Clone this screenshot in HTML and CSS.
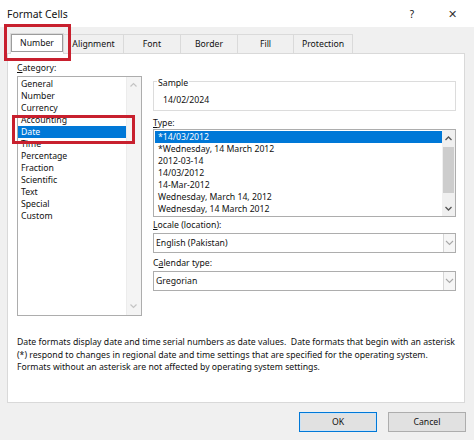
FILE: index.html
```html
<!DOCTYPE html>
<html lang="en">
<head>
  <meta charset="utf-8">
  <title>Format Cells</title>
  <link rel="stylesheet" href="styles.css">
</head>
<body>
  <div class="dialog">
    <div class="titlebar">
      <span class="title">Format Cells</span>
      <span class="help">?</span>
      <span class="close">&#x2715;</span>
    </div>

    <div class="tabs">
      <div class="tab active"><span class="focus">Number</span></div>
      <div class="tab w60">Alignment</div>
      <div class="tab w57">Font</div>
      <div class="tab w57">Border</div>
      <div class="tab w56">Fill</div>
      <div class="tab w59">Protection</div>
    </div>

    <div class="panel">
      <div class="columns">
        <div class="left">
          <div class="label"><u>C</u>ategory:</div>
          <div class="listbox catList">
            <div class="items">
              <div class="item">General</div>
              <div class="item">Number</div>
              <div class="item">Currency</div>
              <div class="item">Accounting</div>
              <div class="item selected">Date</div>
              <div class="item">Time</div>
              <div class="item">Percentage</div>
              <div class="item">Fraction</div>
              <div class="item">Scientific</div>
              <div class="item">Text</div>
              <div class="item">Special</div>
              <div class="item">Custom</div>
            </div>
            <div class="scroll light">
              <svg class="arrow" width="13" height="12" viewBox="0 0 13 12"><polyline points="3.5,7.5 6.5,4.5 9.5,7.5" fill="none" stroke="#c4c4c4" stroke-width="1.2"/></svg>
              <svg class="arrow" width="13" height="12" viewBox="0 0 13 12"><polyline points="3.5,4.5 6.5,7.5 9.5,4.5" fill="none" stroke="#c4c4c4" stroke-width="1.2"/></svg>
            </div>
          </div>
        </div>

        <div class="right">
          <div class="sample">
            <span class="legend">Sample</span>
            <div class="sampleValue">14/02/2024</div>
          </div>

          <div class="label typeLabel"><u>T</u>ype:</div>
          <div class="listbox typeList">
            <div class="items">
              <div class="item selected">*14/03/2012</div>
              <div class="item">*Wednesday, 14 March 2012</div>
              <div class="item">2012-03-14</div>
              <div class="item">14/03/2012</div>
              <div class="item">14-Mar-2012</div>
              <div class="item">Wednesday, March 14, 2012</div>
              <div class="item">Wednesday, 14 March 2012</div>
            </div>
            <div class="scroll dark">
              <svg class="arrow" width="13" height="17" viewBox="0 0 13 17"><polyline points="3.5,10 6.5,7 9.5,10" fill="none" stroke="#555" stroke-width="1.3"/></svg>
              <div class="thumb"></div>
              <svg class="arrow" width="13" height="13" viewBox="0 0 13 13"><polyline points="3.5,5 6.5,8 9.5,5" fill="none" stroke="#555" stroke-width="1.3"/></svg>
            </div>
          </div>

          <div class="label localeLabel"><u>L</u>ocale (location):</div>
          <div class="combo">
            <span class="comboText">English (Pakistan)</span>
            <span class="drop"><svg width="9" height="6" viewBox="0 0 9 6"><polyline points="1,1 4.5,4.5 8,1" fill="none" stroke="#a8a8a8" stroke-width="1.1"/></svg></span>
          </div>

          <div class="label calLabel">C<u>a</u>lendar type:</div>
          <div class="combo">
            <span class="comboText">Gregorian</span>
            <span class="drop"><svg width="9" height="6" viewBox="0 0 9 6"><polyline points="1,1 4.5,4.5 8,1" fill="none" stroke="#a8a8a8" stroke-width="1.1"/></svg></span>
          </div>
        </div>
      </div>

      <p class="desc">Date formats display date and time serial numbers as date values.&nbsp; Date formats that begin with an asterisk<br>
(*) respond to changes in regional date and time settings that are specified for the operating system.<br>
Formats without an asterisk are not affected by operating system settings.</p>
    </div>

    <div class="footer">
      <button class="btn ok">OK</button>
      <button class="btn">Cancel</button>
    </div>

    <div class="mark markTab"></div>
    <div class="mark markDate"></div>
  </div>
</body>
</html>
```

FILE: styles.css
```css
html {
  font-family: "Noto Sans", "Liberation Sans", sans-serif;
}
body {
  margin: 0;
  background: #f0f0f0;
}
.dialog {
  position: relative;
  width: 474px;
  height: 440px;
  background: #f0f0f0;
  font-size: 8.7px;
  color: #111;
  overflow: hidden;
}

/* title bar */
.titlebar {
  height: 27px;
  background: #fff;
  display: flex;
  align-items: center;
  padding: 0 0 0 7px;
}
.title {
  flex: 1;
  font-size: 10.4px;
  margin-top: 1px;
}
.help {
  width: 12px;
  font-size: 10px;
  margin-right: 27px;
  text-align: center;
}
.close {
  width: 14px;
  font-size: 11px;
  margin-right: 15px;
  text-align: center;
  color: #333;
}

/* tabs */
.tabs {
  height: 26px;
  padding-left: 10px;
  display: flex;
  align-items: flex-end;
  background: #f0f0f0;
}
.tab {
  height: 19px;
  box-sizing: border-box;
  border: 1px solid #dadada;
  border-bottom: none;
  border-left: none;
  display: flex;
  align-items: center;
  justify-content: center;
  background: #f0f0f0;
}
.w60 { width: 60px; }
.w57 { width: 57px; }
.w56 { width: 56px; }
.w59 { width: 59px; }
.tab.active {
  width: 54px;
  height: 21px;
  background: #fff;
  border-left: 1px solid #dadada;
  margin-bottom: -1px;
  padding-bottom: 2px;
}
.focus {
  border: 1px solid #9c9c9c;
  padding: 2px 7px;
  width: 38px;
  text-align: center;
}

/* panel */
.panel {
  height: 350px;
  margin: 0 9px 0 7px;
  box-sizing: border-box;
  border: 1px solid #d9d9d9;
  background: #fff;
  padding: 8px 0 0 9px;
}
.columns {
  display: flex;
  gap: 11px;
}
.left {
  width: 125px;
}
.right {
  width: 303px;
}
.label {
  height: 12px;
  line-height: 12px;
}
.listbox {
  display: flex;
  border: 1px solid #adadad;
  box-sizing: border-box;
  background: #fff;
}
.catList {
  margin-top: 2px;
  height: 240px;
}
.items {
  flex: 1;
  padding: 1px 0 0 0;
}
.item {
  height: 12px;
  line-height: 12px;
  padding-left: 3px;
  white-space: nowrap;
}
.item.selected {
  background: #0078d7;
  color: #fff;
}
.scroll {
  width: 14px;
  display: flex;
  flex-direction: column;
  justify-content: space-between;
}
.scroll.light {
  background: #f4f4f4;
  border-left: 1px solid #ececec;
  padding: 2px 0 3px;
}
.scroll.dark {
  width: 13px;
  background: #f0f0f0;
  justify-content: flex-start;
}
.thumb {
  height: 46px;
  background: #cdcdcd;
  margin: 0 1px;
}
.scroll.dark .arrow:last-child {
  margin-top: auto;
  margin-bottom: 1px;
}

/* right column */
.sample {
  margin-top: 19px;
  height: 30px;
  box-sizing: border-box;
  border: 1px solid #dcdcdc;
}
.legend {
  display: inline-block;
  margin: -5px 0 0 3px;
  padding: 0 1px;
  background: #fff;
  line-height: 12px;
  vertical-align: top;
}
.sampleValue {
  padding-left: 9px;
  line-height: 12px;
}
.typeLabel {
  margin-top: 6px;
}
.typeList {
  height: 88px;
}
.typeList .items {
  padding: 1px 0 0 1px;
}
.localeLabel {
  margin-top: 2px;
}
.combo {
  margin-top: 2px;
  height: 20px;
  box-sizing: border-box;
  border: 1px solid #adadad;
  display: flex;
  align-items: center;
  background: #fff;
}
.comboText {
  flex: 1;
  padding-left: 2px;
}
.drop {
  width: 12px;
  height: 18px;
  box-sizing: border-box;
  border-left: 1px solid #d6d6d6;
  background: #f6f6f6;
  display: flex;
  align-items: center;
  justify-content: center;
}
.calLabel {
  margin-top: 4px;
}

/* description */
.desc {
  margin: 20px 0 0 0;
  line-height: 12.5px;
  white-space: nowrap;
}

/* footer buttons */
.footer {
  display: flex;
  justify-content: flex-end;
  gap: 11px;
  padding: 9px 8px 0 0;
}
.btn {
  width: 78px;
  height: 20px;
  background: #e1e1e1;
  border: 1px solid #adadad;
  font-family: inherit;
  font-size: 8.7px;
  color: #111;
  padding: 0;
}
.btn.ok {
  border: 1px solid #0078d7;
  box-shadow: inset 0 0 0 1px #cde3f5;
}

/* red highlight boxes drawn over the dialog */
.mark {
  position: absolute;
  border: 3px solid #c8202e;
  box-sizing: border-box;
}
.markTab {
  left: 4px;
  top: 24px;
  width: 67px;
  height: 37px;
}
.markDate {
  left: 12px;
  top: 115px;
  width: 123px;
  height: 29px;
}
```
